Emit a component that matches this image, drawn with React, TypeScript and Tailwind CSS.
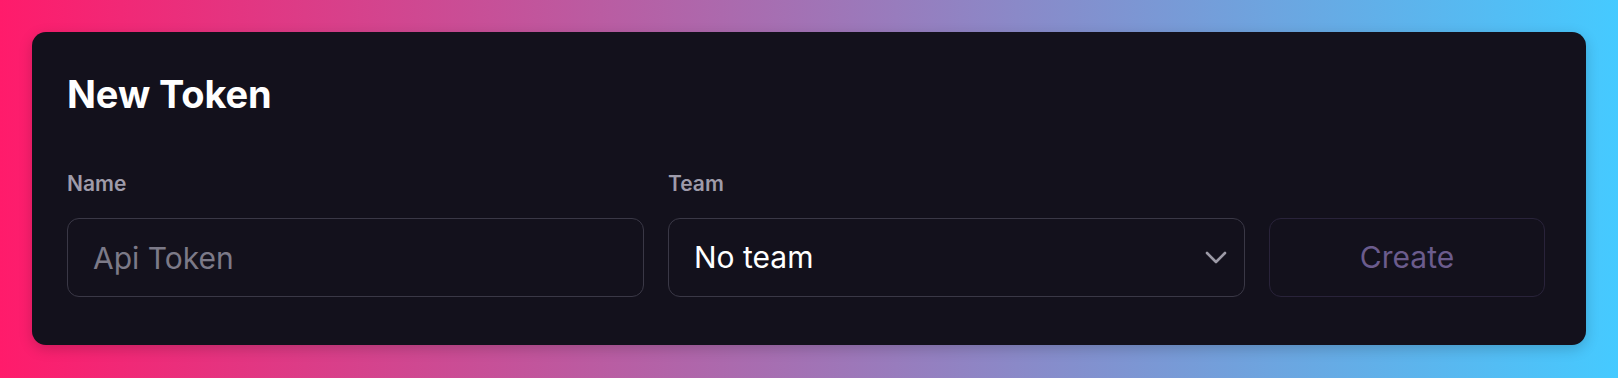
import React from "react";

function Chevron() {
  return (
    <svg width="22" height="13" viewBox="0 0 22 13" fill="none" aria-hidden>
      <polyline
        points="2,2 11,11 20,2"
        stroke="#9c9aa6"
        strokeWidth="2.6"
        strokeLinecap="round"
        strokeLinejoin="round"
      />
    </svg>
  );
}

export default function App() {
  return (
    <div
      className="w-[1618px] h-[378px] p-[32px] bg-[linear-gradient(90deg,#ff1b6b_0%,#45caff_100%)]"
      style={{ fontFamily: "Inter, 'Noto Sans', sans-serif" }}
    >
      <div className="h-[313px] rounded-[14px] bg-[#13111c] pt-[39px] pl-[35px] pr-[41px] shadow-[0_4px_14px_rgba(0,0,0,0.18)]">
        {/* Heading */}
        <h2 className="text-[38px] leading-[46px] font-bold text-white tracking-[-0.1px]">
          New Token
        </h2>

        {/* Form row */}
        <div className="mt-[54px] grid grid-cols-[1fr_1fr_276px] gap-x-[24px] items-end">
          <div className="flex flex-col gap-[21px]">
            <label className="text-[21px] leading-[26px] font-semibold text-[#9e9baa]">
              Name
            </label>
            <input
              type="text"
              placeholder="Api Token"
              className="h-[79px] w-full rounded-[12px] border border-[#3a3846] bg-transparent px-[25px] text-[30px] text-white placeholder:text-[#7c7a88] outline-none"
            />
          </div>

          <div className="flex flex-col gap-[21px]">
            <label className="text-[21px] leading-[26px] font-semibold text-[#9e9baa]">
              Team
            </label>
            <div className="h-[79px] w-full rounded-[12px] border border-[#3a3846] flex items-center justify-between pl-[25px] pr-[17px]">
              <span className="text-[30px] text-white">No team</span>
              <Chevron />
            </div>
          </div>

          <button
            type="button"
            className="h-[79px] w-full rounded-[12px] border border-[#29233a] bg-transparent text-[30px] text-[#6b5c8d]"
          >
            Create
          </button>
        </div>
      </div>
    </div>
  );
}
